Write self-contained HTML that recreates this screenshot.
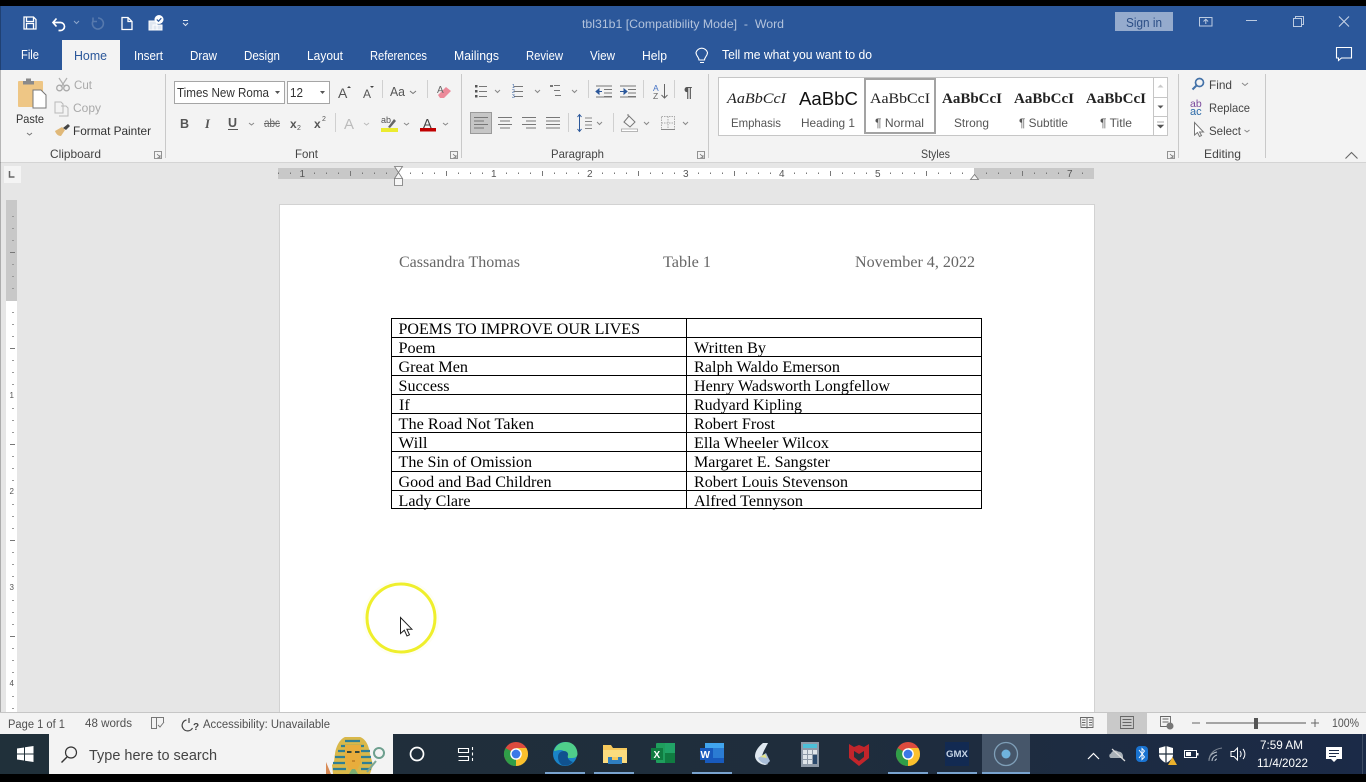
<!DOCTYPE html>
<html lang="en"><head><meta charset="utf-8"><title>tbl31b1 - Word</title>
<style>
html,body{margin:0;padding:0;width:1366px;height:782px;overflow:hidden;background:#000}
svg{display:block}
text{font-family:"Liberation Sans",sans-serif;font-size:12px;fill:#444;white-space:pre}
.tab{fill:#fff;font-size:12.5px}
.rb{fill:#444;font-size:12px}
.dis{fill:#a9a9a9;font-size:12px}
.doc{font-family:"Liberation Serif",serif;font-size:16px;fill:#000}
.hd{font-family:"Liberation Serif",serif;font-size:16px;fill:#666}
.st{fill:#505050;font-size:11.5px}
.rul{fill:#555;font-size:10px}
.ic{fill:none;stroke:#666;stroke-width:1}
.w{fill:none;stroke:#fff;stroke-width:1.3}
.sty{fill:#555;font-size:12px}
</style></head><body>
<svg width="1366" height="782" viewBox="0 0 1366 782" xmlns="http://www.w3.org/2000/svg">
<defs>
<pattern id="hr" x="302" y="167" width="96" height="12" patternUnits="userSpaceOnUse">
<rect x="12" y="5.5" width="1" height="1.5" fill="#777"/><rect x="24" y="5.5" width="1" height="1.5" fill="#777"/><rect x="36" y="5.5" width="1" height="1.5" fill="#777"/><rect x="48" y="4" width="1" height="5" fill="#777"/><rect x="60" y="5.5" width="1" height="1.5" fill="#777"/><rect x="72" y="5.5" width="1" height="1.5" fill="#777"/><rect x="84" y="5.5" width="1" height="1.5" fill="#777"/>
</pattern>
<pattern id="vr" x="7" y="204" width="12" height="96" patternUnits="userSpaceOnUse">
<rect x="5" y="12" width="2" height="1" fill="#999"/><rect x="5" y="24" width="2" height="1" fill="#999"/><rect x="5" y="36" width="2" height="1" fill="#999"/><rect x="3" y="48" width="5" height="1" fill="#777"/><rect x="5" y="60" width="2" height="1" fill="#999"/><rect x="5" y="72" width="2" height="1" fill="#999"/><rect x="5" y="84" width="2" height="1" fill="#999"/>
</pattern>
<linearGradient id="tb" x1="0" x2="1" y1="0" y2="0"><stop offset="0" stop-color="#20303a"/><stop offset=".6" stop-color="#1f2d3c"/><stop offset="1" stop-color="#1b2a47"/></linearGradient>
</defs>

<!-- base -->
<rect width="1366" height="782" fill="#000"/>
<rect y="6" width="1366" height="64" fill="#2b579a"/>
<rect y="70" width="1366" height="92" fill="#f3f3f3"/>
<rect y="162" width="1366" height="551" fill="#e6e6e6"/>
<rect y="162" width="1366" height="1" fill="#d4d4d4"/>
<rect y="0" width="1" height="782" fill="#000" opacity=".25"/>

<!-- QAT -->
<path class="w" d="M24 17h9.5l2.5 2.5v9.5h-12zM26.5 17v4.5h7V17M26.500 29v-5.500h7V29" stroke-width="1.6"/>
<path d="M53.500 22.500h7a4 4 0 0 1 0 8h-2M56.500 18.500l-3.500 4 3.500 4" fill="none" stroke="#fff" stroke-width="1.700"/>
<path d="M74 21l2.500 2.500 2.500-2.500" fill="none" stroke="#8ea7cb" stroke-width="1"/>
<path d="M98 18a5.500 5.500 0 1 1-5 3M93 17.500v4h4" fill="none" stroke="#5679ad" stroke-width="1.600"/>
<path class="w" d="M122 17.500h6l4 4v8h-10zM128 17.500v4h4" stroke-width="1.100"/>
<path d="M149 21h8v9h-8zM153 25h9v5h-9z" fill="#dfe6f0" stroke="#fff"/>
<circle cx="159" cy="19.500" r="4.500" fill="#fff"/><path d="M156.800 19.500l1.700 1.700 2.800-3" fill="none" stroke="#2b579a" stroke-width="1.200"/>
<path d="M183 20.500h5M183 23l2.500 2.500 2.500-2.500" fill="none" stroke="#dfe6f0" stroke-width="1"/>

<text x="582" y="28" textLength="202" lengthAdjust="spacingAndGlyphs" style="fill:#b3c3dc;font-size:12px">tbl31b1 [Compatibility Mode]  -  Word</text>
<rect x="1115" y="12" width="58" height="19" fill="#95abcd"/>
<text x="1126" y="27" textLength="36" lengthAdjust="spacingAndGlyphs" style="fill:#2b4e85;font-size:12.500px">Sign in</text>
<path d="M1199.500 17.500h12.500v8.500h-12.500zM1205.800 24v-4.500M1203.500 21.500l2.300-2.300 2.300 2.300" fill="none" stroke="#bccbe1"/>
<rect x="1246" y="20" width="11" height="1" fill="#bccbe1"/>
<path d="M1293.500 18.500h8v8h-8zM1295.500 18.500v-2h8v8h-2" fill="none" stroke="#bccbe1"/>
<path d="M1339 16.500l10 10M1349 16.500l-10 10" stroke="#c6d3e6" stroke-width="1.100"/>

<!-- tabs -->
<rect x="62" y="40" width="58" height="30" fill="#f3f3f3"/>
<text class="tab" x="21" y="59" textLength="18" lengthAdjust="spacingAndGlyphs">File</text>
<text class="tab" x="74" y="60" textLength="33" lengthAdjust="spacingAndGlyphs" style="fill:#2b579a">Home</text>
<text class="tab" x="134" y="60" textLength="29" lengthAdjust="spacingAndGlyphs">Insert</text>
<text class="tab" x="190" y="60" textLength="27" lengthAdjust="spacingAndGlyphs">Draw</text>
<text class="tab" x="244" y="60" textLength="36" lengthAdjust="spacingAndGlyphs">Design</text>
<text class="tab" x="307" y="60" textLength="36" lengthAdjust="spacingAndGlyphs">Layout</text>
<text class="tab" x="370" y="60" textLength="57" lengthAdjust="spacingAndGlyphs">References</text>
<text class="tab" x="454" y="60" textLength="45" lengthAdjust="spacingAndGlyphs">Mailings</text>
<text class="tab" x="526" y="60" textLength="37" lengthAdjust="spacingAndGlyphs">Review</text>
<text class="tab" x="590" y="60" textLength="25" lengthAdjust="spacingAndGlyphs">View</text>
<text class="tab" x="642" y="60" textLength="25" lengthAdjust="spacingAndGlyphs">Help</text>
<path d="M699 60c0-3-3-4-3-7.500a6 6 0 0 1 11.500 0c0 3.500-3 4.500-3 7.500zM700 62.500h4" fill="none" stroke="#fff" stroke-width="1.100"/>
<text class="tab" x="722" y="59" textLength="150" lengthAdjust="spacingAndGlyphs">Tell me what you want to do</text>
<path d="M1336.500 47.500h15v10.500h-10l-3 2.500v-2.500h-2z" fill="none" stroke="#fff" stroke-width="1.100"/>

<!-- Clipboard -->
<rect x="18" y="81" width="25" height="26" rx="1" fill="#eec685"/>
<path d="M26 81v-2.500h5V81h3v3.500H23V81z" fill="#8a8a8a"/>
<path d="M33 90h8l5 5v13H33z" fill="#fff" stroke="#777"/>
<text class="rb" x="16" y="123" textLength="28" lengthAdjust="spacingAndGlyphs" style="fill:#333">Paste</text>
<path d="M27 133l2.500 2 2.500-2" fill="none" stroke="#777"/>
<path d="M59 78l6 9M67 78l-6 9" stroke="#b0b0b0" stroke-width="1.200"/><circle cx="59.500" cy="88" r="2.800" fill="none" stroke="#aaa" stroke-width="1.300"/><circle cx="66.500" cy="88" r="2.800" fill="none" stroke="#aaa" stroke-width="1.300"/>
<text class="dis" x="74" y="89" textLength="18" lengthAdjust="spacingAndGlyphs">Cut</text>
<path d="M55 102h6l2 2v9h-8zM61 106h5l2 2v8h-9" fill="none" stroke="#b9b9b9"/>
<text class="dis" x="73" y="112" textLength="28" lengthAdjust="spacingAndGlyphs">Copy</text>
<path d="M55 131l7-4 3 3-4 6c-3 0-5-2-6-5z" fill="#e0b878"/><path d="M63 128l5-4 2 2-4 4z" fill="#444"/>
<text class="rb" x="73" y="135" textLength="78" lengthAdjust="spacingAndGlyphs" style="fill:#333">Format Painter</text>
<text class="rb" x="50" y="158" textLength="51" lengthAdjust="spacingAndGlyphs">Clipboard</text>
<path d="M154.500 151.500h7v7h-7zM157 154l3 3M160 155v2.500h-2.500" fill="none" stroke="#777" stroke-width=".8"/>
<rect x="165" y="74" width="1" height="84" fill="#c9c9c9"/>

<!-- Font -->
<rect x="174.500" y="81.500" width="110" height="22" fill="#fff" stroke="#a5a5a5"/>
<rect x="287.500" y="81.500" width="42" height="22" fill="#fff" stroke="#a5a5a5"/>
<text x="177" y="97" textLength="92" lengthAdjust="spacingAndGlyphs" style="fill:#333;font-size:12.500px">Times New Roma</text>
<text x="290" y="97" textLength="13" lengthAdjust="spacingAndGlyphs" style="fill:#333;font-size:12.500px">12</text>
<path d="M275 91h5l-2.500 3zM320 91h5l-2.500 3z" fill="#555"/>
<text x="338" y="98" style="font-size:14px;fill:#555">A</text><path d="M347 88l2-2 2 2z" fill="#444"/>
<text x="363" y="98" style="font-size:12px;fill:#555">A</text><path d="M370 86l2 2 2-2z" fill="#444"/>
<rect x="382" y="80" width="1" height="18" fill="#d0d0d0"/>
<text x="390" y="96" textLength="15" lengthAdjust="spacingAndGlyphs" style="font-size:13px;fill:#555">Aa</text>
<path d="M410 91l3 2.500 3-2.500" fill="none" stroke="#777"/>
<rect x="427" y="80" width="1" height="18" fill="#d0d0d0"/>
<path d="M438 95l8-8 5 4-7 7h-4z" fill="#ec8a9a"/><text x="437" y="93" style="font-size:10px;fill:#666">A</text>
<text x="180" y="128" style="font-size:12.500px;font-weight:bold;fill:#555">B</text>
<text x="205" y="128" style="font-size:12.500px;font-style:italic;font-family:'Liberation Serif',serif;font-weight:bold;fill:#555">I</text>
<text x="228" y="127" style="font-size:12.500px;font-weight:bold;fill:#555">U</text><rect x="228" y="129" width="10" height="1" fill="#555"/>
<path d="M249 123l2.500 2 2.500-2" fill="none" stroke="#888"/>
<text x="264" y="127" textLength="16" lengthAdjust="spacingAndGlyphs" style="font-size:12px;fill:#666">abc</text><rect x="264" y="123" width="16" height="1" fill="#666"/>
<text x="290" y="128" style="font-size:12px;font-weight:bold;fill:#555">x</text><text x="297" y="130" style="font-size:7px;fill:#555">2</text>
<text x="314" y="128" style="font-size:12px;font-weight:bold;fill:#555">x</text><text x="322" y="121" style="font-size:7px;fill:#555">2</text>
<rect x="335" y="113" width="1" height="19" fill="#d0d0d0"/>
<text x="344" y="129" style="font-size:15px;fill:#bbb">A</text>
<path d="M364 123l2.500 2 2.500-2" fill="none" stroke="#bbb"/>
<text x="381" y="123" style="font-size:9px;fill:#555">ab</text>
<path d="M388 127l6-8 2 2-6 7z" fill="#666"/><rect x="381" y="128" width="17" height="4" fill="#ebeb2f"/>
<path d="M404 123l2.500 2 2.500-2" fill="none" stroke="#888"/>
<text x="423" y="128" style="font-size:13px;fill:#444">A</text><rect x="420" y="128" width="16" height="3.500" fill="#c00000"/>
<path d="M443 123l2.500 2 2.500-2" fill="none" stroke="#888"/>
<text class="rb" x="295" y="158" textLength="23" lengthAdjust="spacingAndGlyphs">Font</text>
<path d="M450.500 151.500h7v7h-7zM453 154l3 3M456 155v2.500h-2.500" fill="none" stroke="#777" stroke-width=".8"/>
<rect x="461" y="74" width="1" height="84" fill="#c9c9c9"/>

<!-- Paragraph -->
<g fill="#777"><rect x="475" y="85" width="2.500" height="2.500" fill="#555"/><rect x="475" y="90" width="2.500" height="2.500" fill="#555"/><rect x="475" y="95" width="2.500" height="2.500" fill="#555"/><rect x="479" y="86" width="8" height="1"/><rect x="479" y="91" width="8" height="1"/><rect x="479" y="96" width="8" height="1"/>
<rect x="514" y="86" width="9" height="1"/><rect x="514" y="91" width="9" height="1"/><rect x="514" y="96" width="9" height="1"/><rect x="550" y="85" width="3" height="2"/><rect x="554" y="85" width="6" height="1"/><rect x="554" y="90" width="6" height="1"/><rect x="555" y="95" width="6" height="1"/></g>
<text x="512" y="88" style="font-size:5px;fill:#2b579a">1</text><text x="512" y="93" style="font-size:5px;fill:#2b579a">2</text><text x="512" y="98" style="font-size:5px;fill:#2b579a">3</text>
<path d="M495 90l2.500 2.500 2.500-2.500M535 90l2.500 2.500 2.500-2.500M572 90l2.500 2.500 2.500-2.500" fill="none" stroke="#888"/>
<rect x="588" y="80" width="1" height="18" fill="#d0d0d0"/>
<path d="M596 91.500h6M596 91.500l3-2.500v5zM620 91.500h6M627 91.500l-3-2.500v5z" fill="#2b579a" stroke="#2b579a"/>
<path d="M604 86h8M604 89.500h8M604 93h8M604 96.500h8M628 86h8M628 89.500h8M628 93h8M628 96.500h8M596 86h16M620 86h16M596 97h16M620 97h16" stroke="#777" fill="none"/>
<rect x="643" y="80" width="1" height="18" fill="#d0d0d0"/>
<text x="653" y="91" style="font-size:8.500px;fill:#4472c4">A</text><text x="653" y="99" style="font-size:8.500px;fill:#666">Z</text>
<path d="M664.500 84v14M661.500 95l3 3 3-3" fill="none" stroke="#666"/>
<rect x="674" y="80" width="1" height="18" fill="#d0d0d0"/>
<text x="684" y="97" style="font-size:15px;fill:#555;font-weight:bold">¶</text>
<rect x="470.500" y="112.500" width="21" height="21" fill="#c6c6c6" stroke="#9a9a9a"/>
<path d="M474 117.500h14M474 121h10M474 124.500h14M474 128h10M498 117.500h14M500 121h10M498 124.500h14M500 128h10M522 117.500h14M526 121h10M522 124.500h14M526 128h10M546 117.500h14M546 121h14M546 124.500h14M546 128h14" stroke="#777" fill="none"/>
<rect x="568" y="113" width="1" height="19" fill="#d0d0d0"/>
<path d="M579.500 115v16M577.500 117l2-2.500 2 2.500M577.500 129l2 2.500 2-2.500" fill="none" stroke="#2b579a"/>
<path d="M585 118h7M585 121.500h7M585 125h7M585 128.500h7" stroke="#888"/>
<path d="M597 122l2.500 2.500 2.500-2.500" fill="none" stroke="#888"/>
<rect x="613" y="113" width="1" height="19" fill="#d0d0d0"/>
<path d="M624 122l5-6 6 6-5 5z" fill="#f5f5f5" stroke="#777"/><path d="M628 116v-2" stroke="#777"/><rect x="621.500" y="129" width="16" height="2.500" fill="#fff" stroke="#999" stroke-width=".7"/>
<path d="M644 122l2.500 2.500 2.500-2.500M683 122l2.500 2.500 2.500-2.500" fill="none" stroke="#888"/>
<path d="M661.500 116.500h13v13h-13zM668 116.500v13M661.500 123h13" fill="none" stroke="#aaa" stroke-dasharray="1.500 1"/><rect x="661" y="129" width="14" height="1" fill="#888"/>
<text class="rb" x="551" y="158" textLength="53" lengthAdjust="spacingAndGlyphs">Paragraph</text>
<path d="M697.500 151.500h7v7h-7zM700 154l3 3M703 155v2.500h-2.500" fill="none" stroke="#777" stroke-width=".8"/>
<rect x="708" y="74" width="1" height="84" fill="#c9c9c9"/>

<!-- Styles -->
<rect x="718.500" y="77.500" width="449" height="58" fill="#fff" stroke="#c6c6c6"/>
<rect x="865" y="79" width="70" height="54" fill="#fff" stroke="#a3a3a3" stroke-width="2"/>
<text x="727" y="103" textLength="59" lengthAdjust="spacingAndGlyphs" style="font-family:'Liberation Serif',serif;font-style:italic;font-size:15px;fill:#222">AaBbCcI</text>
<text x="799" y="105" textLength="59" lengthAdjust="spacingAndGlyphs" style="font-size:18px;fill:#111">AaBbC</text>
<text x="870" y="103" textLength="60" lengthAdjust="spacingAndGlyphs" style="font-family:'Liberation Serif',serif;font-size:15px;fill:#222">AaBbCcI</text>
<text x="942" y="103" textLength="60" lengthAdjust="spacingAndGlyphs" style="font-family:'Liberation Serif',serif;font-weight:bold;font-size:15px;fill:#222">AaBbCcI</text>
<text x="1014" y="103" textLength="60" lengthAdjust="spacingAndGlyphs" style="font-family:'Liberation Serif',serif;font-weight:bold;font-size:15px;fill:#222">AaBbCcI</text>
<text x="1086" y="103" textLength="60" lengthAdjust="spacingAndGlyphs" style="font-family:'Liberation Serif',serif;font-weight:bold;font-size:15px;fill:#222">AaBbCcI</text>
<text class="sty" x="731" y="127" textLength="50" lengthAdjust="spacingAndGlyphs">Emphasis</text>
<text class="sty" x="801" y="127" textLength="54" lengthAdjust="spacingAndGlyphs">Heading 1</text>
<text class="sty" x="875" y="127" textLength="49" lengthAdjust="spacingAndGlyphs">¶ Normal</text>
<text class="sty" x="954" y="127" textLength="35" lengthAdjust="spacingAndGlyphs">Strong</text>
<text class="sty" x="1019" y="127" textLength="49" lengthAdjust="spacingAndGlyphs">¶ Subtitle</text>
<text class="sty" x="1100" y="127" textLength="32" lengthAdjust="spacingAndGlyphs">¶ Title</text>
<rect x="1153.500" y="77.500" width="14" height="58" fill="#fff" stroke="#c6c6c6"/>
<path d="M1153.500 97.500h14M1153.500 116.500h14" stroke="#c6c6c6"/>
<path d="M1157.500 87.500l3-3 3 3z" fill="#c9c9c9"/><path d="M1157.500 105.500h6l-3 3z" fill="#555"/><path d="M1157 122h7M1157.500 125h6l-3 3z" fill="#555" stroke="#555" stroke-width=".6"/>
<text class="rb" x="921" y="158" textLength="29" lengthAdjust="spacingAndGlyphs">Styles</text>
<path d="M1167.500 151.500h7v7h-7zM1170 154l3 3M1173 155v2.500h-2.500" fill="none" stroke="#777" stroke-width=".8"/>
<rect x="1178" y="74" width="1" height="84" fill="#c9c9c9"/>

<!-- Editing -->
<circle cx="1199.500" cy="82.500" r="4" fill="none" stroke="#4472a8" stroke-width="1.700"/><path d="M1196.500 85.500l-4 4" stroke="#4472a8" stroke-width="2"/>
<text class="rb" x="1209" y="89" textLength="23" lengthAdjust="spacingAndGlyphs">Find</text>
<path d="M1242 83l3 2.500 3-2.500" fill="none" stroke="#888"/>
<text x="1190" y="107" style="font-size:10.500px;fill:#7a4a9c">ab</text><text x="1190" y="115" style="font-size:11px;fill:#2b6aa8">ac</text>
<text class="rb" x="1209" y="112" textLength="41" lengthAdjust="spacingAndGlyphs">Replace</text>
<path d="M1194.500 122.500v12.500l3-2.500 2 4 2-1-2-3.500h4z" fill="#fff" stroke="#777"/>
<text class="rb" x="1209" y="135" textLength="32" lengthAdjust="spacingAndGlyphs">Select</text>
<path d="M1244.500 130l2.500 2 2.500-2" fill="none" stroke="#888"/>
<text class="rb" x="1204" y="158" textLength="37" lengthAdjust="spacingAndGlyphs">Editing</text>
<rect x="1265" y="74" width="1" height="84" fill="#c9c9c9"/>
<path d="M1345.500 158.500l6-6 6 6" fill="none" stroke="#666" stroke-width="1.100"/>

<!-- ruler -->
<rect x="4" y="166" width="17" height="17" fill="#f4f4f4"/>
<path d="M9.500 171v6h5" fill="none" stroke="#666" stroke-width="1.500"/>
<rect x="278" y="168" width="120" height="11" fill="#c8c8c8"/>
<rect x="398" y="168" width="576" height="11" fill="#fff"/>
<rect x="974" y="168" width="120" height="11" fill="#c8c8c8"/>
<rect x="278" y="167" width="816" height="12" fill="url(#hr)"/>
<text class="rul" x="299.500" y="177">1</text><text class="rul" x="491" y="177">1</text><text class="rul" x="587" y="177">2</text><text class="rul" x="683" y="177">3</text><text class="rul" x="779" y="177">4</text><text class="rul" x="875" y="177">5</text><text class="rul" x="1067" y="177">7</text>
<path d="M394.500 166.500h8l-4 6zM394.500 178.500l4-6 4 6zM394.500 178.500h8v7h-8z" fill="#f7f7f7" stroke="#777" stroke-width=".8"/>
<path d="M970.500 179.500l4-5 4 5z" fill="#f7f7f7" stroke="#777" stroke-width=".8"/>
<rect x="6" y="200" width="11" height="101" fill="#c8c8c8"/>
<rect x="6" y="301" width="11" height="412" fill="#fff"/>
<rect x="6" y="204" width="11" height="508" fill="url(#vr)"/>
<text x="9.500" y="398" style="font-size:8px;fill:#555">1</text><text x="9.500" y="494" style="font-size:8px;fill:#555">2</text><text x="9.500" y="590" style="font-size:8px;fill:#555">3</text><text x="9.500" y="686" style="font-size:8px;fill:#555">4</text>

<!-- page -->
<rect x="279.500" y="204.500" width="815" height="520" fill="#fff" stroke="#d2d2d2"/>
<text class="hd" x="399" y="267" textLength="121" lengthAdjust="spacingAndGlyphs">Cassandra Thomas</text>
<text class="hd" x="663" y="267" textLength="48" lengthAdjust="spacingAndGlyphs">Table 1</text>
<text class="hd" x="855" y="267" textLength="120" lengthAdjust="spacingAndGlyphs">November 4, 2022</text>

<!-- table -->
<path d="M391.500 318.500h590v190h-590zM686.500 318.500v190M391.500 337.500h590M391.500 356.500h590M391.500 375.500h590M391.500 394.500h590M391.500 413.500h590M391.500 432.500h590M391.500 451.500h590M391.500 471.500h590M391.500 490.500h590" fill="none" stroke="#000"/>
<text class="doc" x="398.500" y="334" textLength="241.500" lengthAdjust="spacingAndGlyphs">POEMS TO IMPROVE OUR LIVES</text>
<text class="doc" x="398.500" y="353" textLength="37" lengthAdjust="spacingAndGlyphs">Poem</text><text class="doc" x="694" y="353" textLength="72" lengthAdjust="spacingAndGlyphs">Written By</text>
<text class="doc" x="398.500" y="372" textLength="69.500" lengthAdjust="spacingAndGlyphs">Great Men</text><text class="doc" x="694" y="372" textLength="146" lengthAdjust="spacingAndGlyphs">Ralph Waldo Emerson</text>
<text class="doc" x="398.500" y="391" textLength="51" lengthAdjust="spacingAndGlyphs">Success</text><text class="doc" x="694" y="391" textLength="196" lengthAdjust="spacingAndGlyphs">Henry Wadsworth Longfellow</text>
<text class="doc" x="399" y="410">If</text><text class="doc" x="694" y="410" textLength="108" lengthAdjust="spacingAndGlyphs">Rudyard Kipling</text>
<text class="doc" x="398.500" y="429" textLength="135.500" lengthAdjust="spacingAndGlyphs">The Road Not Taken</text><text class="doc" x="694" y="429" textLength="81" lengthAdjust="spacingAndGlyphs">Robert Frost</text>
<text class="doc" x="398.500" y="448" textLength="29" lengthAdjust="spacingAndGlyphs">Will</text><text class="doc" x="694" y="448" textLength="135" lengthAdjust="spacingAndGlyphs">Ella Wheeler Wilcox</text>
<text class="doc" x="398.500" y="467" textLength="133.500" lengthAdjust="spacingAndGlyphs">The Sin of Omission</text><text class="doc" x="694" y="467" textLength="136" lengthAdjust="spacingAndGlyphs">Margaret E. Sangster</text>
<text class="doc" x="398.500" y="487" textLength="153" lengthAdjust="spacingAndGlyphs">Good and Bad Children</text><text class="doc" x="694" y="487" textLength="154" lengthAdjust="spacingAndGlyphs">Robert Louis Stevenson</text>
<text class="doc" x="398.500" y="506" textLength="72" lengthAdjust="spacingAndGlyphs">Lady Clare</text><text class="doc" x="694" y="506" textLength="109" lengthAdjust="spacingAndGlyphs">Alfred Tennyson</text>

<!-- cursor highlight -->
<circle cx="401" cy="618" r="38" fill="#fdfde8" opacity=".5"/>
<circle cx="401" cy="618" r="34" fill="#fff" stroke="#efef2c" stroke-width="3"/>
<path d="M400.500 617.500v16l3.800-3.300 2.700 5.800 2.500-1.200-2.600-5.600h5z" fill="#fff" stroke="#222" stroke-width="1"/>

<!-- status bar -->
<rect y="712" width="1366" height="1" fill="#c6c6c6"/>
<rect y="713" width="1366" height="21" fill="#f3f3f3"/>
<text class="st" x="8" y="728" textLength="57" lengthAdjust="spacingAndGlyphs">Page 1 of 1</text>
<text class="st" x="85" y="727" textLength="47" lengthAdjust="spacingAndGlyphs">48 words</text>
<path d="M151.500 717.500h5v11h-5zM156.500 717.500h7v5M158 725l2 2 4-5" fill="none" stroke="#777"/>
<path d="M189 718v5M186.500 720a5.500 5.500 0 1 0 6 8" fill="none" stroke="#444" stroke-width="1.200"/>
<text x="193" y="730" style="font-size:10px;font-weight:bold;fill:#444">?</text>
<text class="st" x="203" y="728" textLength="127" lengthAdjust="spacingAndGlyphs">Accessibility: Unavailable</text>
<path d="M1080.500 717.500h6l.5 1 .5-1h5.500v10h-12zM1087 718.500v10M1082 720h3.500M1082 722.500h3.500M1082 725h3.500M1089 720h3M1089 722.500h3M1089 725h3" fill="none" stroke="#666" stroke-width=".9"/>
<rect x="1107" y="713" width="40" height="21" fill="#c9c9c9"/>
<path d="M1120.500 716.500h13v12h-13zM1122.500 719.500h9M1122.500 722.500h9M1122.500 725.500h9" fill="none" stroke="#666" stroke-width=".9"/>
<path d="M1160.500 716.500h10v10h-10zM1162.500 719h6M1162.500 722h6" fill="none" stroke="#666" stroke-width=".9"/><circle cx="1170" cy="726" r="3.500" fill="#777"/>
<rect x="1192" y="722.500" width="8" height="1" fill="#666"/>
<rect x="1206" y="722.500" width="100" height="1" fill="#555"/>
<rect x="1254" y="718" width="4" height="11" fill="#555"/>
<path d="M1311 723h8M1315 719v8" stroke="#666"/>
<text class="st" x="1332" y="727" textLength="27" lengthAdjust="spacingAndGlyphs">100%</text>

<!-- taskbar -->
<rect y="734" width="1366" height="40" fill="url(#tb)"/>
<rect x="49" y="734" width="344" height="40" fill="#f3f3f3"/>
<path d="M17 748.500l7-1v6h-7zM25 747.300l8.500-1.300v7.500H25zM17 754.500h7v6l-7-1zM25 754.500h8.500V762l-8.500-1.300z" fill="#fff"/>
<circle cx="71" cy="752.500" r="5.500" fill="none" stroke="#333" stroke-width="1.200"/><path d="M67 757l-5.500 5.500" stroke="#333" stroke-width="1.400"/>
<text x="89" y="760" textLength="128" lengthAdjust="spacingAndGlyphs" style="font-size:15px;fill:#444">Type here to search</text>
<!-- pharaoh -->
<path d="M345 737h15c6 2 9 9 10 17l3 11-3 9h-37l-1-9c3-3 2-7 3-11 1-8 5-15 10-17z" fill="#d9b84a"/>
<path d="M345 741h15M341 746h23M338 751h7M361 751h9M335 757h10M361 757h10M333 763h12M362 763h10M333 769h13M361 769h10" stroke="#2f7f95" stroke-width="2.300"/>
<path d="M345 745h16v17l-4 8h-8l-4-8z" fill="#e8ad3c"/>
<path d="M347 752h4.500M355 752h4.500" stroke="#1d3a3a" stroke-width="1.800"/>
<path d="M352 761h3" stroke="#b5761f" stroke-width="1.300"/>
<path d="M349 774l3-5h3l3 5z" fill="#7cae74"/>
<path d="M326 762l5 12h-5z" fill="#d88a55"/>
<path d="M367 772l9-11" stroke="#7ba695" stroke-width="2"/><circle cx="379" cy="753" r="5" fill="none" stroke="#6d9f8e" stroke-width="2"/>
<circle cx="417" cy="754" r="6.500" fill="none" stroke="#fff" stroke-width="1.700"/>
<path d="M458.500 748.500h10v4h-10zM458.500 756.500h10v4h-10M472.500 747v3M472.500 752.500v3M472.500 758v3" fill="none" stroke="#fff" stroke-width="1.100"/>

<!-- chrome -->
<g id="chrome">
<circle cx="516" cy="754" r="12" fill="#dd4b3e"/>
<path d="M516 754l-10.400 6a12 12 0 0 1 0-12z" fill="#2f9e48"/><path d="M505.600 760a12 12 0 0 0 10.400 6 12 12 0 0 0 12-12h-12z" fill="#2f9e48"/>
<path d="M516 766a12 12 0 0 0 12-12 12 12 0 0 0-1.600-6H516z" fill="#fbc02d"/>
<circle cx="516" cy="754" r="5.800" fill="#fff"/><circle cx="516" cy="754" r="4.400" fill="#3b78e7"/>
</g>
<!-- edge -->
<circle cx="565" cy="754" r="12" fill="#1a84c8"/>
<path d="M554 751c2-7 8-9 12-9 7 0 11.500 5.500 11.500 12 0 2.500-2 4-5 4h-7c2-4-1-8-5-8-3 0-5 1-6.500 1z" fill="#4fce8a"/>
<path d="M558 757c0-4 3-6 6-6 2.500 0 4.500 2 4 4-1 3 1 6 5 7-3 3-7 4.500-11 3-3-2-4-5-4-8z" fill="#10528f"/>
<!-- folder -->
<path d="M603 745h8l2 3h14v15h-24z" fill="#f6c95c"/><rect x="603" y="750" width="24" height="13" fill="#fcdc7e"/>
<rect x="608" y="757" width="14" height="7" fill="#2f7fc1"/><rect x="612" y="757" width="6" height="3" fill="#f6c95c"/>
<!-- excel -->
<rect x="656" y="743" width="19" height="20" rx="1" fill="#1f9e5d"/><rect x="665" y="743" width="10" height="10" fill="#21a366"/><rect x="665" y="753" width="10" height="10" fill="#107c41"/>
<rect x="651" y="748" width="12" height="12" fill="#107c41"/><text x="653.500" y="758" style="font-size:10px;font-weight:bold;fill:#fff">X</text>
<!-- word -->
<rect x="705" y="743" width="19" height="20" rx="1" fill="#2b7cd3"/><rect x="705" y="743" width="19" height="5" fill="#41a5ee"/><rect x="705" y="758" width="19" height="5" fill="#185abd"/>
<rect x="700" y="748" width="13" height="12" fill="#185abd"/><text x="700.500" y="758" style="font-size:10px;font-weight:bold;fill:#fff">W</text>
<!-- scanner -->
<path d="M763 743c-4 3-8 8-8 13 0 3 3 8 10 9l3-1c-4-3-6-6-6-8 1-4 4-9 6-13z" fill="#dfe8f0"/><path d="M758 758l8-5 4 8-3 3c-4 0-7-2-9-6z" fill="#a8bdd8"/><path d="M760 757l5-3 2 4z" fill="#e3e38a"/>
<!-- calc -->
<rect x="801" y="742" width="18" height="25" fill="#8e9aa8"/><rect x="803" y="744" width="14" height="4" fill="#4cc0d8"/>
<g fill="#dfe5ea"><rect x="803" y="750" width="4" height="4"/><rect x="808" y="750" width="4" height="4"/><rect x="813" y="750" width="4" height="4"/><rect x="803" y="755" width="4" height="4"/><rect x="808" y="755" width="4" height="4"/><rect x="803" y="760" width="4" height="4"/><rect x="808" y="760" width="4" height="4"/></g>
<rect x="813" y="755" width="4" height="9" fill="#2b4a6d"/>
<!-- mcafee -->
<path d="M849 744l5 3 5-2 5 2 5-3v14l-10 8-10-8z" fill="#c2252b"/><path d="M854 751l5 3 5-3v6l-5 4-5-4z" fill="#26303a"/>
<!-- chrome 2 -->
<use href="#chrome" x="392"/>
<!-- GMX -->
<rect x="945" y="742" width="24" height="24" fill="#122a52"/>
<text x="946" y="757" textLength="22" lengthAdjust="spacingAndGlyphs" style="font-size:9px;font-weight:bold;fill:#c5d3e4">GMX</text>
<!-- active -->
<rect x="982" y="734" width="48" height="40" fill="#46566a"/>
<circle cx="1006" cy="754" r="11.500" fill="none" stroke="#7f9fb8" stroke-width="1.300"/><circle cx="1006" cy="754" r="4.500" fill="#6fb3dd"/>
<g fill="#79a3cf"><rect x="545" y="772" width="40" height="2"/><rect x="594" y="772" width="40" height="2"/><rect x="692" y="772" width="40" height="2"/><rect x="888" y="772" width="40" height="2"/><rect x="937" y="772" width="40" height="2"/><rect x="982" y="772" width="48" height="2"/></g>
<!-- tray -->
<path d="M1088 759l5.500-5.500 5.500 5.500" fill="none" stroke="#fff" stroke-width="1.200"/>
<path d="M1111 758c-2 0-2.500-4 0-4.500 1-3 5-4 7-2 3 0 5 2 5 5v1.500h-12z" fill="#a9b1b8"/><path d="M1112 749l13 12" stroke="#ddd" stroke-width="1.200"/>
<rect x="1136" y="746" width="12" height="16" rx="4" fill="#1973d1"/><path d="M1139 750l5.500 7-2.500 2.500v-11l2.500 2.500-5.500 7" fill="none" stroke="#fff" stroke-width=".9"/>
<path d="M1159 748l7-2 7 2v7c0 3-3 6-7 8-4-2-7-5-7-8z" fill="#fff"/><path d="M1166 746v17M1159 754h14" stroke="#1f2d3c" stroke-width="1.200"/><path d="M1168 765l4.500-8 4.500 8z" fill="#eab02c"/>
<rect x="1184.500" y="750.500" width="12" height="7" fill="none" stroke="#fff"/><rect x="1186" y="752" width="5" height="4" fill="#fff"/><rect x="1197" y="753" width="1.500" height="2.500" fill="#fff"/>
<path d="M1209 761c0-5 3-8 8-9M1212 761c0-3 2-5 5-6M1215 761c0-1 1-2 2-2" fill="none" stroke="#bcc5cf"/><path d="M1209 761c0-7 5-12 13-13" fill="none" stroke="#7d8794"/>
<path d="M1231 751.500h3l3.500-3.500v12l-3.500-3.500h-3zM1240 751c1.500 2 1.500 4 0 6M1243 749c2.500 3 2.500 7 0 10" fill="none" stroke="#fff"/>
<text x="1260" y="749" textLength="43" lengthAdjust="spacingAndGlyphs" style="fill:#fff;font-size:12px">7:59 AM</text>
<text x="1257" y="767" textLength="51" lengthAdjust="spacingAndGlyphs" style="fill:#fff;font-size:12px">11/4/2022</text>
<path d="M1326 747h16v12h-5l-3 3-3-3h-5z" fill="#fff"/><path d="M1329 750.500h10M1329 753.500h10M1329 756.500h7" stroke="#1b2a47"/>
<rect x="1362" y="734" width="1" height="40" fill="#3d4b62"/>
</svg>
</body></html>
